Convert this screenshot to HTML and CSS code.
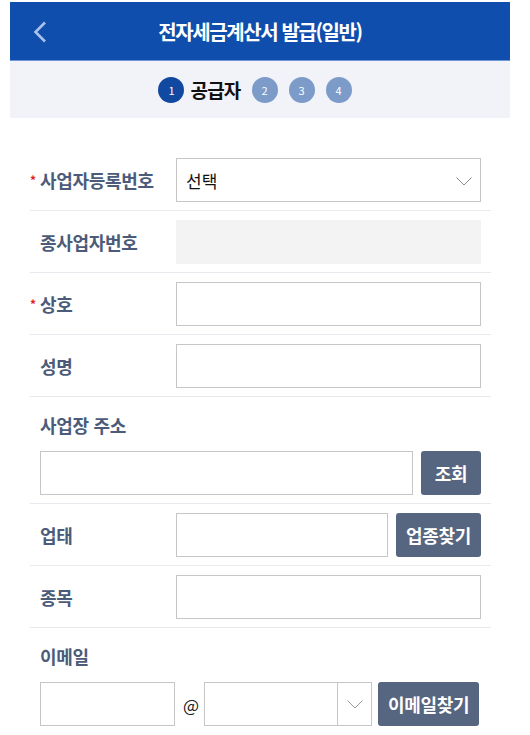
FILE: index.html
```html
<!DOCTYPE html>
<html lang="ko">
  <head>
    <meta charset="utf-8" />
    <meta name="viewport" content="width=device-width, initial-scale=1" />
    <title>전자세금계산서 발급(일반)</title>
    <link rel="stylesheet" href="styles.css">
  </head>
  <body>
    <div class="page">
      <!-- top bar -->
      <div class="header">
        <a class="back" href="#">
          <svg width="14" height="22" viewBox="0 0 14 22">
            <path d="M12 1.5 L2.5 11 L12 20.5" fill="none" stroke="#a9c1e8" stroke-width="2.6" />
          </svg>
        </a>
        <h1>전자세금계산서 발급(일반)</h1>
      </div>

      <!-- steps -->
      <div class="steps">
        <span class="step active">1</span>
        <span class="step-name">공급자</span>
        <span class="step">2</span>
        <span class="step">3</span>
        <span class="step">4</span>
      </div>

      <form class="form">
        <div class="row">
          <label class="label"><span class="req">*</span>사업자등록번호</label>
          <div class="select">
            <span>선택</span>
            <svg class="arrow" width="16" height="9" viewBox="0 0 16 9">
              <path d="M0.5 0.5 L8 8 L15.5 0.5" fill="none" stroke="#8a8a8a" stroke-width="1" />
            </svg>
          </div>
        </div>

        <div class="row">
          <label class="label">종사업자번호</label>
          <div class="box disabled"></div>
        </div>

        <div class="row">
          <label class="label"><span class="req">*</span>상호</label>
          <input class="box" type="text" />
        </div>

        <div class="row">
          <label class="label">성명</label>
          <input class="box" type="text" />
        </div>

        <div class="row stacked">
          <label class="label">사업장 주소</label>
          <div class="line">
            <input class="box" type="text" />
            <button type="button" class="btn">조회</button>
          </div>
        </div>

        <div class="row">
          <label class="label">업태</label>
          <input class="box" type="text" />
          <button type="button" class="btn">업종찾기</button>
        </div>

        <div class="row">
          <label class="label">종목</label>
          <input class="box" type="text" />
        </div>

        <div class="row stacked last">
          <label class="label">이메일</label>
          <div class="line">
            <input class="box email-id" type="text" />
            <span class="at">@</span>
            <div class="domain">
              <input type="text" />
              <span class="domain-arrow">
                <svg width="16" height="9" viewBox="0 0 16 9">
                  <path d="M0.5 0.5 L8 8 L15.5 0.5" fill="none" stroke="#9a9a9a" stroke-width="1" />
                </svg>
              </span>
            </div>
            <button type="button" class="btn">이메일찾기</button>
          </div>
        </div>
      </form>
    </div>
  </body>
</html>
```

FILE: styles.css
```css
body {
  margin: 0;
  padding-top: 2px;
  background: #fff;
  font-family: "Noto Sans CJK KR", "Noto Sans", sans-serif;
}

.page {
  width: 500px;
  margin-left: 10px;
}

.header {
  height: 58px;
  background-color: #0f4eac;
  border-bottom: 1px solid #6f95d4;
  display: flex;
  align-items: center;
  justify-content: center;
  position: relative;
}

.header h1 {
  margin: 0;
  color: #fff;
  font-size: 20px;
  font-weight: 700;
  letter-spacing: -1.4px;
}

.back {
  position: absolute;
  left: 23px;
  top: 19px;
  display: block;
}

.steps {
  height: 57px;
  background-color: #f1f3f9;
  display: flex;
  align-items: center;
  justify-content: center;
  gap: 11px;
  padding-right: 10px;
}

.step {
  width: 26px;
  height: 26px;
  border-radius: 50%;
  background-color: #7c9bc9;
  color: #fff;
  font-size: 11px;
  display: flex;
  align-items: center;
  justify-content: center;
}

.step.active {
  background-color: #1249a0;
  margin-right: -5px;
}

.step-name {
  font-size: 19px;
  font-weight: 700;
  color: #111;
  letter-spacing: -0.8px;
}

.form {
  margin: 31px 19px 0 20px;
}

.row {
  display: flex;
  align-items: center;
  gap: 8px;
  padding: 9px 10px 8px 10px;
  border-bottom: 1px solid #e6e9ee;
}

.row.stacked {
  flex-direction: column;
  align-items: stretch;
  gap: 7px;
}

.row.last {
  border-bottom: none;
}

.label {
  width: 136px;
  flex-shrink: 0;
  margin-right: -8px;
  position: relative;
  font-size: 18px;
  font-weight: 700;
  color: #4b5b79;
  letter-spacing: -0.3px;
  line-height: 38px;
}

.req {
  position: absolute;
  left: -10px;
  top: 0;
  color: #e02020;
  font-size: 12px;
}

.box {
  flex: 1;
  height: 44px;
  box-sizing: border-box;
  border: 1px solid #c6c6c6;
  border-radius: 0;
  background: #fff;
  margin: 0;
  font-size: 16px;
  font-family: inherit;
}

.box.disabled {
  background-color: #f3f3f3;
  border-color: #f3f3f3;
}

.select {
  flex: 1;
  height: 44px;
  box-sizing: border-box;
  border: 1px solid #c6c6c6;
  display: flex;
  align-items: center;
  justify-content: space-between;
  padding: 0 8px 0 9px;
  font-size: 17px;
  color: #111;
}

.select .arrow {
  margin-top: 2px;
}

.line {
  display: flex;
  align-items: center;
  gap: 8px;
}

.btn {
  height: 44px;
  padding: 0 10px;
  border: none;
  border-radius: 3px;
  background-color: #566580;
  color: #fff;
  font-family: inherit;
  font-size: 18px;
  font-weight: 700;
  letter-spacing: -0.3px;
  cursor: pointer;
  flex-shrink: 0;
}

.line .btn {
  min-width: 60px;
}

.email-id {
  flex: none;
  width: 135px;
}

.at {
  width: 15px;
  margin: 0 -2px 0 0;
  text-align: center;
  font-size: 17px;
  color: #222;
}

.domain {
  flex: none;
  width: 168px;
  height: 44px;
  box-sizing: border-box;
  border: 1px solid #c6c6c6;
  display: flex;
  margin-right: -2px;
}

.domain input {
  flex: 1;
  min-width: 0;
  border: none;
  border-right: 1px solid #c6c6c6;
  margin: 0;
  padding: 0;
}

.domain-arrow {
  width: 33px;
  display: flex;
  align-items: center;
  justify-content: center;
}
```
